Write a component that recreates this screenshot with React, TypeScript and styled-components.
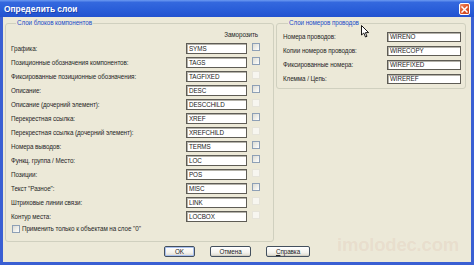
import React from "react";
import styled, { createGlobalStyle } from "styled-components";

const Global = createGlobalStyle`
  html, body { margin: 0; padding: 0; background: #ECE9D8; }
  * { box-sizing: border-box; }
`;

const Window = styled.div`
  position: relative;
  width: 474px;
  height: 265px;
  display: flex;
  flex-direction: column;
  background: #3A5FD3;
  overflow: hidden;
  font-family: "Liberation Sans", Arial, sans-serif;
  font-size: 6.3px;
  letter-spacing: -0.08px;
  color: #262626;
`;

const TitleBar = styled.div`
  flex: none;
  height: 17px;
  display: flex;
  align-items: center;
  justify-content: space-between;
  padding: 0 4px 0 4px;
  background: linear-gradient(to bottom, #6C9AF2 0%, #3468DE 14%, #2A5ED9 55%, #2252CF 100%);
  color: #fff;
  font-size: 8.4px;
  font-weight: bold;
  letter-spacing: 0;
  text-shadow: 1px 1px 0 rgba(10, 30, 120, 0.45);
`;

const CloseButton = styled.div`
  width: 11px;
  height: 12px;
  margin-top: 1px;
  border: 1px solid #fff;
  border-radius: 2px;
  background: linear-gradient(135deg, #F0906A 0%, #E25A2C 45%, #C8401C 100%);
  display: flex;
  align-items: center;
  justify-content: center;
`;

const Body = styled.div`
  flex: 1;
  margin: 0 3px 3px 3px;
  background: #ECE9D8;
  display: flex;
  flex-direction: column;
  padding: 2px 4px 0 2px;
`;

const Columns = styled.div`
  display: flex;
  align-items: flex-start;
  gap: 2px;
`;

const Group = styled.fieldset<{ $w: number; $pad: string }>`
  width: ${(p) => p.$w}px;
  margin: 0;
  min-width: 0;
  padding: ${(p) => p.$pad};
  border: 1px solid #D0D0BF;
  border-radius: 3px;
`;

const Legend = styled.legend`
  margin-left: 5px;
  padding: 0 1px;
  line-height: 8px;
  color: #1A4CC8;
`;

const FreezeHeader = styled.div`
  margin: 4px 0 4px 0;
  padding-right: 2px;
  text-align: right;
  line-height: 8px;
`;

const Row = styled.div<{ $h: number; $gap: number }>`
  display: flex;
  align-items: flex-start;
  height: ${(p) => p.$h}px;
  margin-bottom: ${(p) => p.$gap}px;
`;

const Label = styled.div<{ $h: number }>`
  flex: 1;
  line-height: ${(p) => p.$h}px;
  white-space: nowrap;
`;

const TextField = styled.div<{ $w: number; $h: number }>`
  width: ${(p) => p.$w}px;
  height: ${(p) => p.$h}px;
  flex: none;
  background: #fff;
  border: 1px solid #5E5C55;
  box-shadow: inset 1px 1px 0 #B4B2AA;
  padding-left: 2px;
  line-height: ${(p) => p.$h - 2}px;
  color: #222;
  white-space: nowrap;
  overflow: hidden;
`;

const Check = styled.div<{ $disabled?: boolean }>`
  width: 8px;
  height: 8px;
  flex: none;
  margin-left: 5px;
  border: 1px solid ${(p) => (p.$disabled ? "#E6E4DA" : "#8EA0B6")};
  background: ${(p) =>
    p.$disabled ? "#F7F6F0" : "linear-gradient(135deg, #DCDCD4 0%, #F4F4F0 70%, #FFFFFF 100%)"};
`;

const ApplyRow = styled.div`
  display: flex;
  align-items: center;
  gap: 2px;
  margin-top: 3px;
  padding-left: 1px;
  line-height: 8px;
`;

const ApplyCheck = styled(Check)`
  margin-left: 0;
`;

const ButtonRow = styled.div`
  display: flex;
  gap: 15px;
  margin-top: 4px;
  padding-left: 159px;
`;

const Button = styled.div<{ $w: number; $focused?: boolean }>`
  width: ${(p) => p.$w}px;
  height: 11px;
  border: 1px solid #44505E;
  border-radius: 2px;
  background: linear-gradient(to bottom, #FFFFFF 0%, #F4F3EE 60%, #DCD9CE 100%);
  box-shadow: ${(p) => (p.$focused ? "inset 0 0 0 1px #A9C0EE" : "inset 0 -1px 0 #D2CFC2")};
  display: flex;
  align-items: center;
  justify-content: center;
  line-height: 9px;
  color: #222;
`;

const Mnemonic = styled.span`
  text-decoration: underline;
`;

const Watermark = styled.div`
  position: absolute;
  left: 337px;
  top: 234px;
  font-family: "Liberation Sans", Arial, sans-serif;
  font-weight: bold;
  font-size: 18.5px;
  letter-spacing: -0.2px;
  color: rgba(205, 145, 135, 0.14);
  pointer-events: none;
`;

const Cursor = styled.svg`
  position: absolute;
  left: 361px;
  top: 25px;
`;

type BlockRow = { label: string; value: string; disabled: boolean };

const blockRows: BlockRow[] = [
  { label: "Графика:", value: "SYMS", disabled: false },
  { label: "Позиционные обозначения компонентов:", value: "TAGS", disabled: false },
  { label: "Фиксированные позиционные обозначения:", value: "TAGFIXED", disabled: true },
  { label: "Описание:", value: "DESC", disabled: false },
  { label: "Описание (дочерний элемент):", value: "DESCCHILD", disabled: true },
  { label: "Перекрестная ссылка:", value: "XREF", disabled: false },
  { label: "Перекрестная ссылка (дочерний элемент):", value: "XREFCHILD", disabled: true },
  { label: "Номера выводов:", value: "TERMS", disabled: false },
  { label: "Функц. группа / Место:", value: "LOC", disabled: false },
  { label: "Позиции:", value: "POS", disabled: true },
  { label: "Текст \"Разное\":", value: "MISC", disabled: false },
  { label: "Штриховые линии связи:", value: "LINK", disabled: true },
  { label: "Контур места:", value: "LOCBOX", disabled: true },
];

const wireRows = [
  { label: "Номера проводов:", value: "WIRENO" },
  { label: "Копии номеров проводов:", value: "WIRECOPY" },
  { label: "Фиксированные номера:", value: "WIREFIXED" },
  { label: "Клемма / Цепь:", value: "WIREREF" },
];

export default function App() {
  return (
    <>
      <Global />
      <Window>
        <TitleBar>
          <span>Определить слои</span>
          <CloseButton>
            <svg width="7" height="7" viewBox="0 0 7 7">
              <path d="M1 1 L6 6 M6 1 L1 6" stroke="#fff" strokeWidth="1.5" strokeLinecap="square" />
            </svg>
          </CloseButton>
        </TitleBar>
        <Body>
          <Columns>
            <Group $w={269} $pad="0 13px 8px 5px">
              <Legend>Слои блоков компонентов</Legend>
              <FreezeHeader>Заморозить</FreezeHeader>
              {blockRows.map((r) => (
                <Row key={r.value} $h={11} $gap={3}>
                  <Label $h={11}>{r.label}</Label>
                  <TextField $w={61} $h={11}>{r.value}</TextField>
                  <Check $disabled={r.disabled} />
                </Row>
              ))}
              <ApplyRow>
                <ApplyCheck />
                <span>Применить только к объектам на слое "0"</span>
              </ApplyRow>
            </Group>
            <Group $w={190} $pad="5px 4px 0 6px">
              <Legend>Слои номеров проводов</Legend>
              {wireRows.map((r) => (
                <Row key={r.value} $h={10} $gap={4}>
                  <Label $h={10}>{r.label}</Label>
                  <TextField $w={74} $h={10}>{r.value}</TextField>
                </Row>
              ))}
            </Group>
          </Columns>
          <ButtonRow>
            <Button $w={31} $focused>OK</Button>
            <Button $w={41}>Отмена</Button>
            <Button $w={44}>
              <span>
                <Mnemonic>С</Mnemonic>правка
              </span>
            </Button>
          </ButtonRow>
        </Body>
        <Watermark>imolodec.com</Watermark>
        <Cursor width="9" height="13" viewBox="0 0 9 13">
          <path d="M0.5 0.5 L0.5 10 L2.8 8 L4.5 12 L6 11.3 L4.4 7.6 L7.6 7.6 Z" fill="#fff" stroke="#000" strokeWidth="0.9" />
        </Cursor>
      </Window>
    </>
  );
}
